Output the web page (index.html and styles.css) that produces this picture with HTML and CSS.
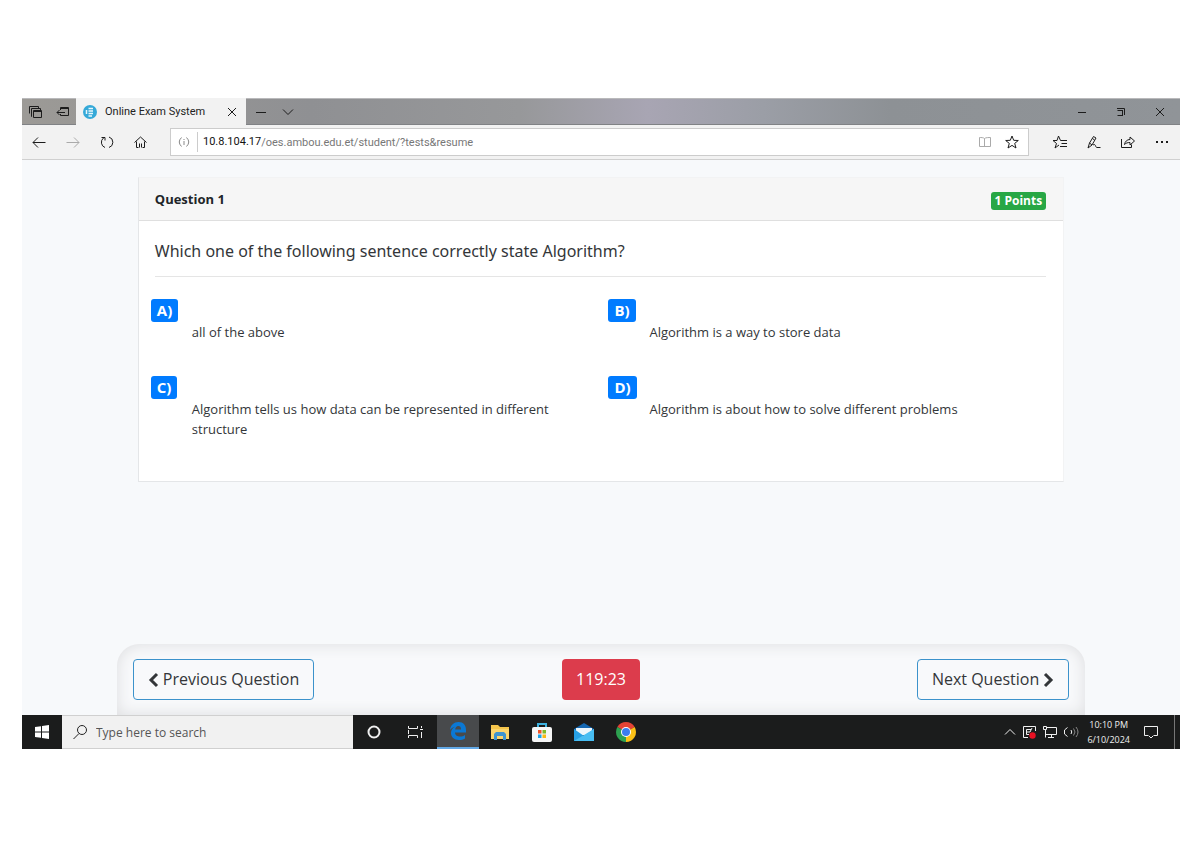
FILE: index.html
```html
<!DOCTYPE html>
<html lang="en">
<head>
    <meta charset="UTF-8">
    <title>Online Exam System</title>
    <link rel="stylesheet" href="styles.css">
</head>
<body>

<div class="titlebar">
    <div class="tab-tools">
        <button class="icon-btn" aria-label="Tabs set aside">
            <svg width="14" height="14" viewBox="0 0 14 14"><path d="M.5 8.500v-7h9v2M3 11.500H2.500v-8h9v2M4.500 5.500h8v7h-8zM4.500 6.500h8"/></svg>
        </button>
        <button class="icon-btn" aria-label="Set tabs aside">
            <svg width="14" height="14" viewBox="0 0 14 14"><path d="M4.500 5V2.500h8v8h-8V9M1 7.500h8M3.500 5L1 7.500 3.500 10M4.500 3.500h8"/></svg>
        </button>
    </div>
    <div class="tab">
        <svg class="favicon" width="14" height="14" viewBox="0 0 14 14"><circle cx="7" cy="7" r="7" fill="#35a9d8" stroke="none"/><path d="M5.500 3.500H10M5.500 6H10M5.500 8.500H10M5.500 11H9M3.500 5v4" stroke="#e9f7fc" stroke-width="1.500"/></svg>
        <span class="tab-title">Online Exam System</span>
        <button class="icon-btn" aria-label="Close tab">
            <svg width="10" height="10" viewBox="0 0 10 10"><path d="M1 1l8 8M9 1L1 9"/></svg>
        </button>
    </div>
    <div class="tab-actions">
        <button class="icon-btn" aria-label="New tab">
            <svg width="12" height="12" viewBox="0 0 12 12"><path d="M1 6.500h10"/></svg>
        </button>
        <button class="icon-btn" aria-label="Tab previews">
            <svg width="12" height="12" viewBox="0 0 12 12"><path d="M1 3.500l5 5 5-5"/></svg>
        </button>
    </div>
    <div class="window-controls">
        <button class="icon-btn" aria-label="Minimize">
            <svg width="10" height="10" viewBox="0 0 10 10"><path d="M1 5.500h8"/></svg>
        </button>
        <button class="icon-btn" aria-label="Restore">
            <svg width="10" height="10" viewBox="0 0 10 10"><path d="M1.500 3.500h5v5h-5M1 1.500h7.500V8M6.500 3v6"/></svg>
        </button>
        <button class="icon-btn" aria-label="Close">
            <svg width="10" height="10" viewBox="0 0 10 10"><path d="M1 1l8 8M9 1L1 9"/></svg>
        </button>
    </div>
</div>

<div class="toolbar">
    <div class="nav-buttons">
        <button class="icon-btn" aria-label="Back">
            <svg width="14" height="14" viewBox="0 0 14 14"><path d="M1 7.500h12.500M6 2.500l-5 5 5 5"/></svg>
        </button>
        <button class="icon-btn faded" aria-label="Forward">
            <svg width="14" height="14" viewBox="0 0 14 14"><path d="M.5 7.500H13M8 2.500l5 5-5 5"/></svg>
        </button>
        <button class="icon-btn" aria-label="Refresh">
            <svg width="14" height="14" viewBox="0 0 14 14"><path d="M5 12.500A5.500 5.500 0 0 1 3.500 3M9 2a5.500 5.500 0 0 1 0 10.500M1.500 2.500h3.500v3"/></svg>
        </button>
        <button class="icon-btn" aria-label="Home">
            <svg width="14" height="14" viewBox="0 0 14 14"><path d="M.5 7.500L6.500 2l6 5.500M2.500 6.500v6h2M10.500 6.500v6h-2M5.500 12.500v-4M7.500 12.500v-4"/></svg>
        </button>
    </div>
    <div class="address-bar">
        <svg class="info" width="12" height="12" viewBox="0 0 12 12"><path d="M3.500 1.500q-4.500 4.500 0 9M8.500 1.500q4.500 4.500 0 9M6 5v4M6 3v1"/></svg>
        <label class="host" for="url">10.8.104.17</label>
        <input type="text" id="url" value="/oes.ambou.edu.et/student/?tests&amp;resume">
        <button class="icon-btn faded" aria-label="Reading view">
            <svg width="14" height="14" viewBox="0 0 14 14"><path d="M6.500 3.500c-1-1-3.500-1-5-1v9h11v-9c-1.500 0-5 0-6 1zM6.500 3.500v8"/></svg>
        </button>
        <button class="icon-btn" aria-label="Add to favorites">
            <svg width="14" height="14" viewBox="0 0 14 14"><path d="M7 1l1.700 4.300 4.600.2-3.600 2.900 1.300 4.600L7 10.400 3 13l1.300-4.600L.7 5.500l4.600-.2z"/></svg>
        </button>
    </div>
    <div class="tool-buttons">
        <button class="icon-btn" aria-label="Favorites">
            <svg width="16" height="14" viewBox="0 0 16 14"><path d="M15 5.500H8.500L6.500 1 5 5.500H1l3.500 3L3 13l4-3M15 8.500H9.500M15 11.500H8"/></svg>
        </button>
        <button class="icon-btn" aria-label="Add notes">
            <svg width="16" height="14" viewBox="0 0 16 14"><path d="M2 13l1.500-5 4-6.500 2.500 1.500-4 7zM3.500 8l2.500 2M6.500 3.500l2 1.500M7 10c3-2 2 2.500 4 2.500h3.500"/></svg>
        </button>
        <button class="icon-btn" aria-label="Share">
            <svg width="16" height="14" viewBox="0 0 16 14"><path d="M1.500 4v8.500h10v-3M4.500 9.500c.5-3 2.500-5 5.500-5V2l4.500 4-4.500 4V7.500c-2.500 0-4 .5-5.500 2z"/></svg>
        </button>
        <button class="icon-btn" aria-label="More">
            <svg width="16" height="14" viewBox="0 0 16 14"><path d="M2 7h2M7 7h2M12 7h2" stroke-width="2"/></svg>
        </button>
    </div>
</div>

<main class="page">
    <div class="card">
        <div class="card-header">
            <h1>Question 1</h1>
            <span class="points">1 Points</span>
        </div>
        <div class="card-body">
            <p class="question">Which one of the following sentence correctly state Algorithm?</p>
            <div class="options">
                <div class="option">
                    <span class="letter">A)</span>
                    <p>all of the above</p>
                </div>
                <div class="option">
                    <span class="letter">B)</span>
                    <p>Algorithm is a way to store data</p>
                </div>
                <div class="option">
                    <span class="letter">C)</span>
                    <p>Algorithm tells us how data can be represented in different structure</p>
                </div>
                <div class="option">
                    <span class="letter">D)</span>
                    <p>Algorithm is about how to solve different problems</p>
                </div>
            </div>
        </div>
    </div>

    <div class="exam-nav">
        <button class="nav-btn prev">
            <svg width="11" height="16" viewBox="0 0 11 16"><path d="M9 2L3 8l6 6"/></svg>
            Previous Question
        </button>
        <span class="timer">119:23</span>
        <button class="nav-btn next">
            Next Question
            <svg width="11" height="16" viewBox="0 0 11 16"><path d="M2 2l6 6-6 6"/></svg>
        </button>
    </div>
</main>

<div class="taskbar">
    <button class="start" aria-label="Start">
        <svg width="14" height="14" viewBox="0 0 14 14"><path d="M0 2l6-.8v5.300H0zM7 1l7-1v6.500H7zM0 7.500h6v5.300L0 12zM7 7.500h7V14l-7-1z" fill="#fff" stroke="none"/></svg>
    </button>
    <div class="search">
        <svg width="16" height="16" viewBox="0 0 16 16"><circle cx="10" cy="6" r="4.500"/><path d="M7 9.500L1.500 15"/></svg>
        <input type="text" aria-label="Search" placeholder="Type here to search">
    </div>
    <div class="apps">
        <button class="app" aria-label="Cortana">
            <svg width="14" height="14" viewBox="0 0 14 14"><circle cx="7" cy="7" r="5.500" stroke-width="2"/></svg>
        </button>
        <button class="app" aria-label="Task view">
            <svg width="16" height="14" viewBox="0 0 16 14"><path d="M.5 1v2.500h9V1M.5 13v-2.500h9V13M.5 5v4M13.500 1v2M13.500 7v6M12 4.500h3" /></svg>
        </button>
        <button class="app active" aria-label="Edge">
            <svg width="18" height="20" viewBox="0 0 18 20"><path d="M1 9C1.500 4 5 1 9.500 1c5 0 7.500 3.500 7.500 8v2.500H6c.2 3 2.500 4 5 4 2 0 3.500-.5 5-1.500v3.500c-1.800 1-3.800 1.500-6 1.500-5 0-8-3-8-7 0-2.800 1.500-5 4-6.200C3.800 6.500 2 7.500 1 9zm5.200-.5H12C12 6 11 5 9.300 5 7.500 5 6.500 6.500 6.200 8.500z" fill="#0b78d4" stroke="none"/></svg>
        </button>
        <button class="app" aria-label="File Explorer">
            <svg width="20" height="18" viewBox="0 0 20 18"><g stroke="none"><path d="M1 2h7l2 2h9v12H1z" fill="#f5c54b"/><path d="M1 6h18v10H1z" fill="#fbd56c"/><path d="M4 17v-6l2-2h8l2 2v6h-3v-4H7v4z" fill="#3f94cf"/></g></svg>
        </button>
        <button class="app" aria-label="Store">
            <svg width="20" height="20" viewBox="0 0 20 20"><g stroke="none"><path d="M5 6V1h10v5h-2V3H7v3z" fill="#3db1df"/><rect y="5" width="20" height="15" rx="2" fill="#f6f6f6"/><path d="M6 8h3.500v3.500H6z" fill="#f05125"/><path d="M10.500 8H14v3.500h-3.500z" fill="#7eba28"/><path d="M6 12.500h3.500V16H6z" fill="#1ba2e8"/><path d="M10.500 12.500H14V16h-3.500z" fill="#fbb813"/></g></svg>
        </button>
        <button class="app" aria-label="Mail">
            <svg width="20" height="18" viewBox="0 0 20 18"><g stroke="none"><path d="M0 6l10-6 10 6v6H0z" fill="#1466b0"/><path d="M2 5h16v7H2z" fill="#edf6fb"/><path d="M0 6l10 7 10-7v12H0z" fill="#27a0e5"/><path d="M0 18l20-12v12z" fill="#48bdf2"/></g></svg>
        </button>
        <button class="app" aria-label="Chrome">
            <svg width="20" height="20" viewBox="0 0 20 20"><g stroke="none"><path d="M10 10L1.340 5A10 10 0 0 1 18.660 5z" fill="#e34335"/><path d="M10 10l8.660-5A10 10 0 0 1 10 20z" fill="#fbc116"/><path d="M10 10v10A10 10 0 0 1 1.340 5z" fill="#2da150"/><circle cx="10" cy="10" r="5" fill="#fff"/><circle cx="10" cy="10" r="4" fill="#3b7ded"/></g></svg>
        </button>
    </div>
    <div class="tray">
        <svg width="12" height="14" viewBox="0 0 12 14"><path d="M1 9.500l5-5 5 5"/></svg>
        <svg width="15" height="14" viewBox="0 0 15 14"><path d="M6 12.500H1.500v-11h12V6M9 4.500H4.500v5H7M4.500 7H8l2-4"/><circle cx="10.500" cy="10.500" r="3.200" fill="#e81123" stroke="none"/></svg>
        <svg width="14" height="14" viewBox="0 0 14 14"><path d="M4 2.500h9.500v7H3M.5 1.500h3v3h-3zM2.500 5v7.500M5 12.500h6M8.500 9.500v3"/></svg>
        <svg width="16" height="14" viewBox="0 0 16 14"><path d="M4.500 2.500L1.500 5v4l3 2.500M8 5q1.500 2 0 4"/><path d="M10.500 3.500q3 3.500 0 7M13 2q4 5 0 10" stroke="#888"/></svg>
        <div class="clock">
            <span>10:10 PM</span>
            <span>6/10/2024</span>
        </div>
        <svg class="notice" width="14" height="14" viewBox="0 0 14 14"><path d="M4 10.500H.5v-9h13v9H10M4.500 10.500L7 13l2.500-2.500"/></svg>
    </div>
    <button class="show-desktop" aria-label="Show desktop"></button>
</div>

</body>
</html>
```

FILE: styles.css
```css
* {
    box-sizing: border-box;
    font-family: "Open Sans", "Noto Sans", sans-serif;
}

body {
    margin: 0;
    padding: 98px 20px 99px 22px;
    min-height: 100vh;
    display: flex;
    flex-direction: column;
    background: #fff;
    color: #333639;
}

svg {
    flex: none;
    fill: none;
    stroke: currentColor;
    stroke-width: 1;
}

button {
    padding: 0;
    border: none;
    background: none;
    color: inherit;
}

input {
    min-width: 0;
    padding: 0;
    border: none;
    outline: none;
    background: none;
}

h1,
p {
    margin: 0;
}

.icon-btn {
    display: flex;
    align-items: center;
    justify-content: center;
    color: #1c1c1c;
}

.icon-btn.faded {
    color: #aaa;
}

/* browser tabs */
.titlebar {
    display: flex;
    height: 27px;
    background: linear-gradient(90deg, #9c9a96, #8f9093 25%, #97989a 43%, #a8a5b3 54%, #9b9ea6 64%, #8d9195 75%, #909498);
    box-shadow: inset 0 1px #b9b9bb, inset 0 -1px #808285;
}

.tab-tools {
    display: flex;
    justify-content: space-around;
    width: 54px;
}

.tab {
    display: flex;
    align-items: center;
    width: 170px;
    padding: 0 8px 0 7px;
    background: #f2f2f2;
}

.tab-title {
    flex: 1;
    padding-left: 8px;
    font-family: Roboto, sans-serif;
    font-size: 11px;
    line-height: 16px;
    color: #222;
}

.tab .icon-btn {
    width: 12px;
}

.tab-actions {
    display: flex;
    gap: 15px;
    padding-left: 9px;
}

.window-controls {
    display: flex;
    gap: 29px;
    margin-left: auto;
    padding-right: 15px;
}

/* address row */
.toolbar {
    display: flex;
    align-items: center;
    height: 35px;
    background: #f2f2f2;
    border-bottom: 1px solid #d0d0d0;
}

.nav-buttons {
    display: flex;
    gap: 20px;
    width: 148px;
    padding-left: 10px;
}

.address-bar {
    flex: 1;
    display: flex;
    align-items: center;
    height: 28px;
    padding: 0 9px 0 7px;
    background: #fff;
    border: 1px solid #ccc;
    font-size: 11px;
    line-height: 20px;
}

.address-bar .info {
    color: #888;
}

.address-bar .host,
.address-bar input {
    font-family: Roboto, sans-serif;
    font-size: 11px;
}

.address-bar .host {
    margin-left: 7px;
    padding-left: 5px;
    border-left: 1px solid #ccc;
    color: #111;
}

.address-bar input {
    flex: 1;
    height: 20px;
    color: #777;
}

.address-bar .icon-btn {
    margin-left: 13px;
}

.tool-buttons {
    display: flex;
    gap: 18px;
    padding: 0 10px 0 23px;
}

/* exam page */
.page {
    flex: 1;
    display: flex;
    flex-direction: column;
    align-items: center;
    padding-top: 17px;
    background: #f7f9fb;
}

.card {
    width: 80%;
    background: #fff;
    border: 1px solid #e4e6e8;
    border-top-color: #f2f3f4;
    border-right-color: #f2f3f4;
}

.card-header {
    display: flex;
    align-items: center;
    justify-content: space-between;
    height: 43px;
    padding: 0 17px 0 16px;
    background: #f6f6f6;
    border-bottom: 1px solid #dfdfdf;
}

.card-header h1 {
    font-size: 13px;
    line-height: 20px;
    color: #212529;
}

.points {
    margin-top: 4px;
    padding: 0 4px;
    border-radius: 3px;
    background: #28a745;
    color: #fff;
    font-size: 12px;
    line-height: 18px;
    font-weight: bold;
}

.card-body {
    padding: 18px 17px 42px 16px;
}

.question {
    padding-bottom: 13px;
    border-bottom: 1px solid #e5e5e5;
    font-family: "Noto Sans", sans-serif;
    font-size: 16px;
    line-height: 24px;
}

.options {
    display: grid;
    grid-template-columns: 1fr 1fr;
    gap: 34px 0;
    margin: 22px -12px 0;
}

.option {
    padding: 0 8px;
    font-size: 13px;
    line-height: 20px;
}

.option p {
    padding-left: 41px;
}

.letter {
    display: inline-block;
    padding: 0 6px;
    border-radius: 3px;
    background: #007bff;
    color: #fff;
    font-size: 15px;
    line-height: 23px;
    font-weight: bold;
    vertical-align: top;
}

.exam-nav {
    display: grid;
    grid-template-columns: 1fr auto 1fr;
    width: calc(80% + 42px);
    margin-top: auto;
    padding: 15px 16px;
    border-radius: 22px 22px 0 0;
    background: #f8f9fb;
    box-shadow: inset 0 0 16px #dcdddf;
    font-size: 16px;
    line-height: 25px;
}

.nav-btn {
    display: flex;
    align-items: center;
    gap: 4px;
    padding: 7px 14px;
    border: 1px solid #3b92cb;
    border-radius: 4px;
    background: #f8f9fb;
    font-size: 16px;
    line-height: 25px;
}

.nav-btn svg {
    stroke-width: 3;
}

.prev {
    justify-self: start;
}

.next {
    justify-self: end;
}

.timer {
    padding: 8px 14px;
    border-radius: 4px;
    background: #dc3c4c;
    color: #fff;
}

/* windows taskbar */
.taskbar {
    display: flex;
    height: 34px;
    background: #1b1c1c;
    color: #f0f0f0;
}

.start {
    display: flex;
    align-items: center;
    justify-content: center;
    width: 40px;
}

.search {
    display: flex;
    align-items: center;
    gap: 8px;
    width: 291px;
    padding-left: 10px;
    background: #f1f1f1;
    border: solid #d0d0d0;
    border-width: 1px 0;
    color: #222;
}

.search input {
    flex: 1;
    font-size: 12px;
}

.search input::placeholder {
    color: #555;
}

.apps {
    display: flex;
}

.app {
    display: flex;
    align-items: center;
    justify-content: center;
    width: 42px;
}

.app.active {
    background: #484a4c;
    border-bottom: 2px solid #63a9e6;
}

.tray {
    display: flex;
    align-items: center;
    gap: 6px;
    margin-left: auto;
    padding-right: 16px;
}

.clock {
    display: flex;
    flex-direction: column;
    align-items: center;
    margin-left: 2px;
    font-size: 9px;
    line-height: 15px;
}

.notice {
    margin-left: 8px;
}

.show-desktop {
    width: 6px;
    border-left: 1px solid #777;
}
```
